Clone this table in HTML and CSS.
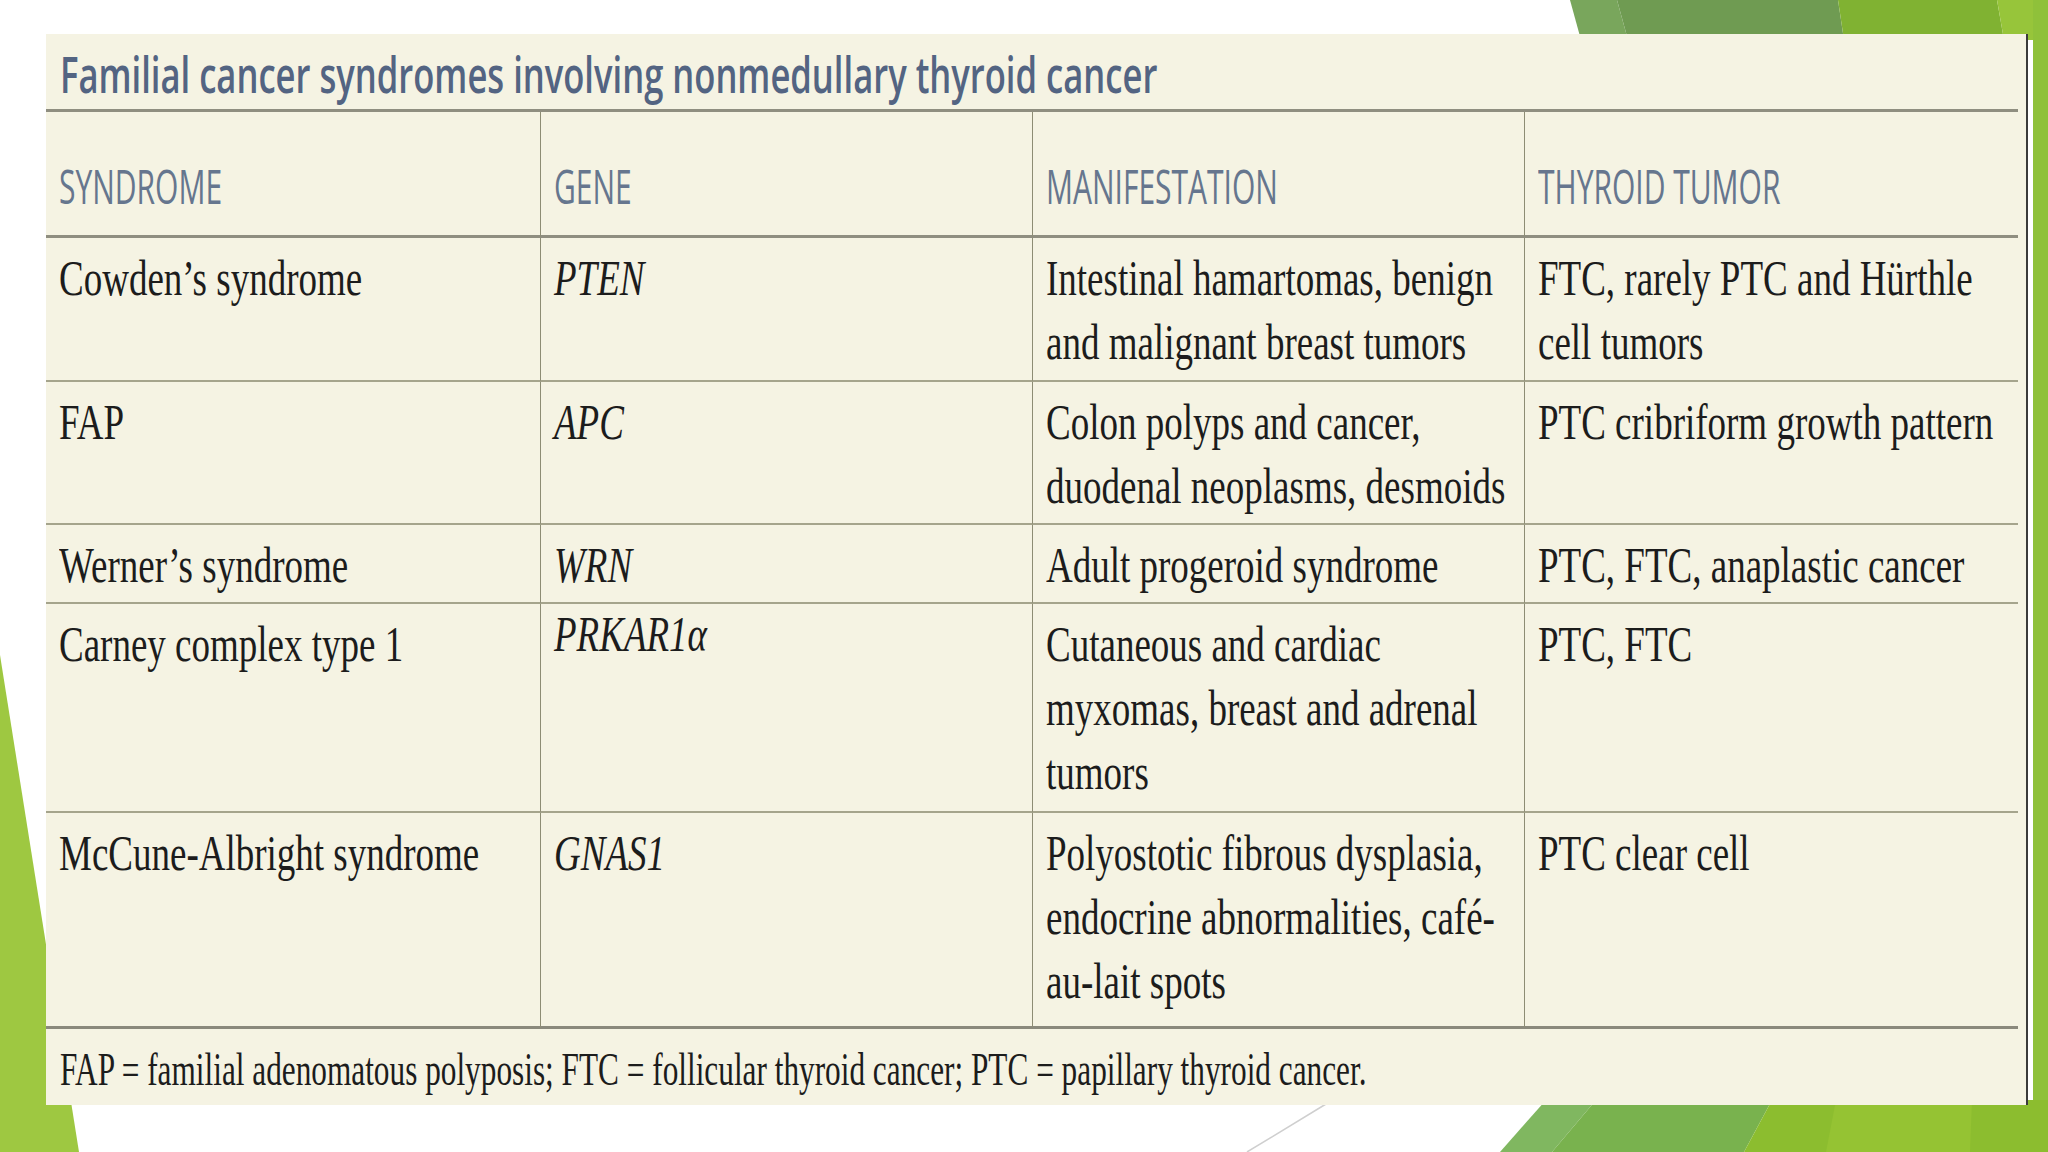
FILE: index.html
```html
<!DOCTYPE html>
<html lang="en">
<head>
<meta charset="utf-8">
<title>Familial cancer syndromes involving nonmedullary thyroid cancer</title>
<link rel="stylesheet" href="styles.css">
</head>
<body>
<div class="slide">
  <svg class="deco" width="2048" height="1152" viewBox="0 0 2048 1152" aria-hidden="true">
    <polygon points="1570,0 1617,0 1628,40 1581,40" fill="#79a65c"/>
    <polygon points="1617,0 1838,0 1844,40 1628,40" fill="#6f9b52"/>
    <polygon points="1838,0 1997,0 2004,40 1844,40" fill="#80b232"/>
    <polygon points="1997,0 2048,0 2048,40 2004,40" fill="#97c53a"/>
    <rect x="2033" y="0" width="15" height="1152" fill="#8fc13a"/>
    <polygon points="0,655 79,1152 0,1152" fill="#9ec841"/>
    <polygon points="1500,1152 1546,1100 1596,1100 1552,1152" fill="#80b760"/>
    <polygon points="1552,1152 1596,1100 1772,1100 1744,1152" fill="#79b24e"/>
    <polygon points="1744,1152 1772,1100 2048,1100 2048,1152" fill="#8cbd2f"/>
    <polygon points="1826,1152 1836,1100 1972,1100 1970,1152" fill="#95c333"/>
    <line x1="1247" y1="1152" x2="1326" y2="1104" stroke="#cfcfcf" stroke-width="1.5"/>
  </svg>

  <div class="panel">
    <div class="title"><span class="sq-title">Familial cancer syndromes involving nonmedullary thyroid cancer</span></div>

    <div class="grid">
      <div class="hcell"><span class="sq-h">SYNDROME</span></div>
      <div class="hcell"><span class="sq-h">GENE</span></div>
      <div class="hcell"><span class="sq-h">MANIFESTATION</span></div>
      <div class="hcell last"><span class="sq-h">THYROID TUMOR</span></div>

      <div class="cell"><span class="sq">Cowden’s syndrome</span></div>
      <div class="cell gene"><span class="sq">PTEN</span></div>
      <div class="cell"><span class="sq">Intestinal hamartomas, benign<br>and malignant breast tumors</span></div>
      <div class="cell last"><span class="sq">FTC, rarely PTC and Hürthle<br>cell tumors</span></div>

      <div class="cell"><span class="sq">FAP</span></div>
      <div class="cell gene"><span class="sq">APC</span></div>
      <div class="cell"><span class="sq">Colon polyps and cancer,<br>duodenal neoplasms, desmoids</span></div>
      <div class="cell last"><span class="sq">PTC cribriform growth pattern</span></div>

      <div class="cell"><span class="sq">Werner’s syndrome</span></div>
      <div class="cell gene"><span class="sq">WRN</span></div>
      <div class="cell"><span class="sq">Adult progeroid syndrome</span></div>
      <div class="cell last"><span class="sq">PTC, FTC, anaplastic cancer</span></div>

      <div class="cell"><span class="sq">Carney complex type 1</span></div>
      <div class="cell gene up"><span class="sq">PRKAR1α</span></div>
      <div class="cell"><span class="sq">Cutaneous and cardiac<br>myxomas, breast and adrenal<br>tumors</span></div>
      <div class="cell last"><span class="sq">PTC, FTC</span></div>

      <div class="cell endrow"><span class="sq">McCune-Albright syndrome</span></div>
      <div class="cell gene endrow"><span class="sq">GNAS1</span></div>
      <div class="cell endrow"><span class="sq">Polyostotic fibrous dysplasia,<br>endocrine abnormalities, café-<br>au-lait spots</span></div>
      <div class="cell last endrow"><span class="sq">PTC clear cell</span></div>
    </div>

    <div class="foot"><span class="sq-f">FAP = familial adenomatous polyposis; FTC = follicular thyroid cancer; PTC = papillary thyroid cancer.</span></div>
  </div>
</div>
</body>
</html>
```

FILE: styles.css
```css
html, body {
  margin: 0;
  padding: 0;
}

body {
  width: 2048px;
  height: 1152px;
  overflow: hidden;
  background: #ffffff;
}

.slide {
  position: relative;
  width: 2048px;
  height: 1152px;
  padding-top: 34px;
  box-sizing: border-box;
  overflow: hidden;
}

.deco {
  position: absolute;
  left: 0;
  top: 0;
}

.panel {
  position: relative;
  margin-left: 46px;
  width: 1982px;
  height: 1071px;
  box-sizing: border-box;
  padding-right: 8px;
  background: #f5f3e3;
  border-right: 2px solid #3b3b3b;
}

.title {
  height: 78px;
  box-sizing: border-box;
  padding: 15px 0 0 14px;
  border-bottom: 3px solid #8f8e80;
  font-family: "Open Sans", "Noto Sans", sans-serif;
  font-weight: 600;
  font-size: 50px;
  line-height: 50px;
  color: #536482;
  white-space: nowrap;
}

.sq-title,
.sq-h,
.sq,
.sq-f {
  display: inline-block;
  transform-origin: 0 0;
  white-space: nowrap;
}

.sq-title { transform: scaleX(0.692); }
.sq-h { transform: scaleX(0.625); }
.sq { transform: scaleX(0.74); }
.sq-f { transform: scaleX(0.68); }

.grid {
  display: grid;
  grid-template-columns: 495px 492px 492px 493px;
  grid-template-rows: 126px 144px 143px 79px 209px 216px;
}

.hcell,
.cell {
  box-sizing: border-box;
  border-right: 1px solid #8d8c74;
  padding-left: 13px;
  overflow: hidden;
}

.hcell.last,
.cell.last {
  border-right: none;
}

.hcell {
  padding-top: 50px;
  border-bottom: 3px solid #8f8e80;
  font-family: "Open Sans", "Noto Sans", sans-serif;
  font-weight: 400;
  font-size: 48px;
  line-height: 48px;
  color: #66768e;
}

.cell {
  padding-top: 8px;
  border-bottom: 2px solid #a5a48c;
  font-family: "Liberation Serif", "Times New Roman", serif;
  font-size: 50px;
  line-height: 64px;
  color: #1c1c1c;
}

.cell.gene {
  font-style: italic;
}

.cell.up {
  padding-top: 4px;
  line-height: 52px;
}

.cell.endrow {
  border-bottom: 3px solid #8a897c;
}

.foot {
  padding: 13px 0 0 14px;
  font-family: "Liberation Serif", "Times New Roman", serif;
  font-size: 46px;
  line-height: 56px;
  color: #1c1c1c;
}
```
